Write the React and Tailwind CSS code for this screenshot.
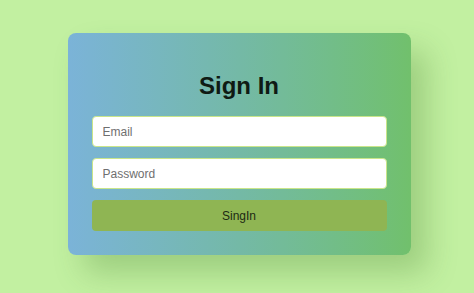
export default function App() {
  return (
    <div className="w-[474px] h-[293px] bg-[#c2f0a1] flex justify-center pt-[33px] pl-[4px] font-['Liberation_Sans',Arial,sans-serif]">
      <div className="w-[343px] h-[222px] rounded-[8px] bg-gradient-to-r from-[#7bb3d8] via-[#74b9a6] to-[#71c06c] px-[24px] pt-[39px] shadow-[16px_18px_30px_rgba(60,120,40,0.28)]">
        <h2 className="text-[24px] leading-[28px] font-bold text-center text-[#0f1a14]">Sign In</h2>
        <div className="mt-[16px] flex flex-col gap-[11px]">
          <input
            placeholder="Email"
            className="h-[31px] w-full rounded-[4px] bg-white border border-[#c9e58a] px-[10px] text-[12px] placeholder:text-[#6f6f6f] outline-none"
          />
          <input
            placeholder="Password"
            type="password"
            className="h-[31px] w-full rounded-[4px] bg-white border border-[#c9e58a] px-[10px] text-[12px] placeholder:text-[#6f6f6f] outline-none"
          />
          <button className="h-[31px] w-full rounded-[4px] bg-[#8fb553] text-[12px] text-[#1c2a14]">SingIn</button>
        </div>
      </div>
    </div>
  );
}
